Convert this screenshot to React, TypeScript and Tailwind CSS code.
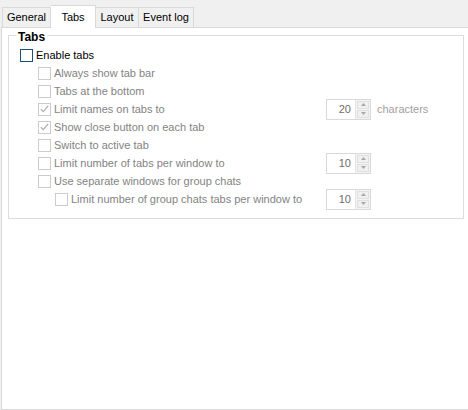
import React from "react";

const font = { fontFamily: '"Liberation Sans", Arial, sans-serif' };

function Check({ checked, disabled }: { checked?: boolean; disabled?: boolean }) {
  return (
    <span
      className={
        "flex size-[13px] shrink-0 items-center justify-center border bg-white " +
        (disabled ? "border-[#cccccc]" : "border-[#1b4e7b]")
      }
    >
      {checked && (
        <svg width="9" height="8" viewBox="0 0 9 8">
          <path d="M0.8 4.2 L3.3 6.6 L8.2 0.9" fill="none" stroke="#b0b0b0" strokeWidth="1.3" />
        </svg>
      )}
    </span>
  );
}

function Spinner({ value }: { value: string }) {
  return (
    <div className="flex h-[21px] w-[45px] shrink-0 border border-[#d9d9d9] bg-white">
      <div className="flex flex-1 items-center justify-end pr-[4px] text-[11px] text-[#6d6d6d]">{value}</div>
      <div className="flex w-[15px] flex-col gap-px border-l border-[#e3e3e3] bg-[#f4f4f4] p-px">
        <div className="flex flex-1 items-center justify-center border border-[#e0e0e0] bg-[#f0f0f0]">
          <svg width="5" height="3" viewBox="0 0 5 3">
            <path d="M0 3 L2.5 0 L5 3 Z" fill="#a8a8a8" />
          </svg>
        </div>
        <div className="flex flex-1 items-center justify-center border border-[#e0e0e0] bg-[#f0f0f0]">
          <svg width="5" height="3" viewBox="0 0 5 3">
            <path d="M0 0 L2.5 3 L5 0 Z" fill="#a8a8a8" />
          </svg>
        </div>
      </div>
    </div>
  );
}

function Row({
  label,
  checked,
  indent = 0,
  spin,
  suffix,
}: {
  label: string;
  checked?: boolean;
  indent?: number;
  spin?: string;
  suffix?: string;
}) {
  return (
    <div className="flex h-[18px] items-center">
      <div
        className="flex items-center gap-[3px] text-[#838383]"
        style={{ width: 306 - indent, marginLeft: indent }}
      >
        <Check checked={checked} disabled />
        <span>{label}</span>
      </div>
      {spin && <Spinner value={spin} />}
      {suffix && <span className="ml-[6px] text-[#a0a0a0]">{suffix}</span>}
    </div>
  );
}

export default function App() {
  return (
    <div className="h-[410px] w-[468px] overflow-hidden bg-[#f0f0f0] text-[11px] text-black" style={font}>
      {/* Tab strip */}
      <div className="flex h-[27px] items-end pl-[2px]">
        <div className="flex h-[20px] w-[49px] items-center justify-center border border-b-0 border-[#d9d9d9]">
          General
        </div>
        <div className="relative z-10 -mb-px flex h-[23px] w-[45px] items-center justify-center border border-l-0 border-b-0 border-[#d9d9d9] bg-white">
          Tabs
        </div>
        <div className="flex h-[20px] w-[43px] items-center justify-center border border-l-0 border-b-0 border-[#d9d9d9]">
          Layout
        </div>
        <div className="flex h-[20px] w-[55px] items-center justify-center border border-l-0 border-b-0 border-[#d9d9d9]">
          Event log
        </div>
      </div>

      {/* Panel */}
      <div className="ml-px h-[383px] w-[480px] border border-[#d9d9d9] bg-white pt-[7px] pl-[6px]">
        <div className="relative w-[456px] border border-[#dcdcdc] pt-[10px] pb-[10px] pl-[11px]">
          <span className="absolute -top-[8px] left-[7px] bg-white px-[2px] text-[12px] font-bold">Tabs</span>
          <div className="flex h-[18px] items-center gap-[3px]">
            <Check />
            <span>Enable tabs</span>
          </div>
          <Row label="Always show tab bar" indent={18} />
          <Row label="Tabs at the bottom" indent={18} />
          <Row label="Limit names on tabs to" checked indent={18} spin="20" suffix="characters" />
          <Row label="Show close button on each tab" checked indent={18} />
          <Row label="Switch to active tab" indent={18} />
          <Row label="Limit number of tabs per window to" indent={18} spin="10" />
          <Row label="Use separate windows for group chats" indent={18} />
          <Row label="Limit number of group chats tabs per window to" indent={35} spin="10" />
        </div>
      </div>
    </div>
  );
}
